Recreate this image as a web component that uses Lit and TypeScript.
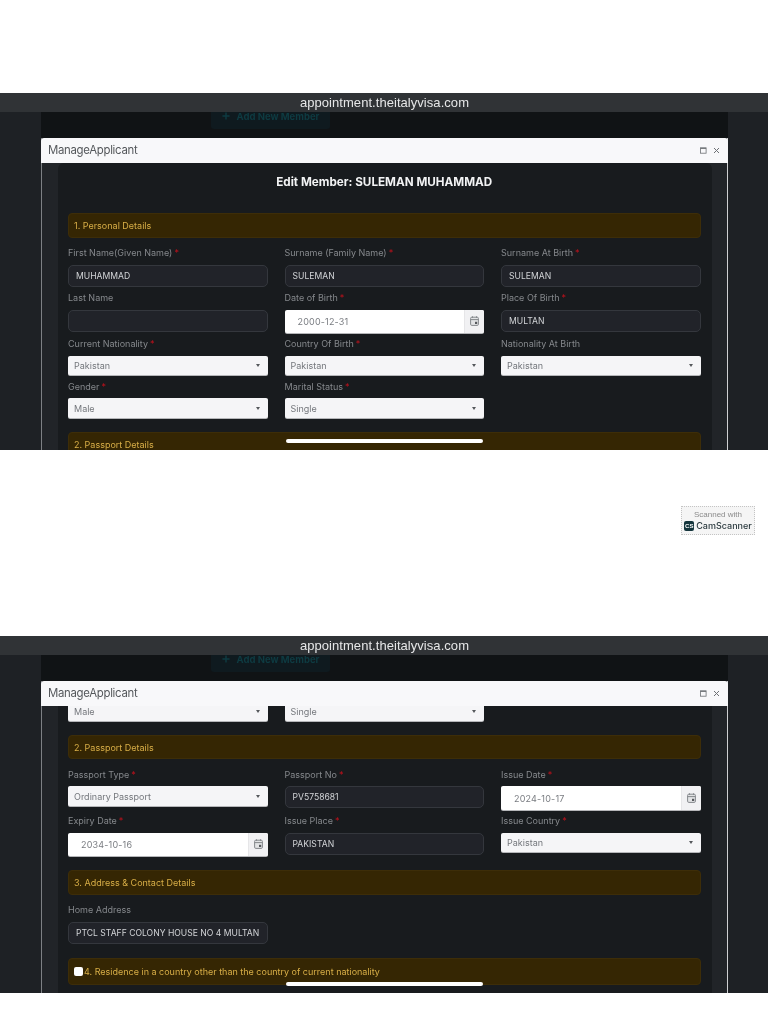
import { LitElement, html, css, nothing } from "lit";
import { customElement, property } from "lit/decorators.js";

type Field = { label: string; kind: "input" | "date" | "select"; value: string; req?: boolean };

const sections: { title: string; check?: boolean; fields: Field[] }[] = [
  {
    title: "1. Personal Details",
    fields: [
      { label: "First Name(Given Name)", kind: "input", value: "MUHAMMAD", req: true },
      { label: "Surname (Family Name)", kind: "input", value: "SULEMAN", req: true },
      { label: "Surname At Birth", kind: "input", value: "SULEMAN", req: true },
      { label: "Last Name", kind: "input", value: "" },
      { label: "Date of Birth", kind: "date", value: "2000-12-31", req: true },
      { label: "Place Of Birth", kind: "input", value: "MULTAN", req: true },
      { label: "Current Nationality", kind: "select", value: "Pakistan", req: true },
      { label: "Country Of Birth", kind: "select", value: "Pakistan", req: true },
      { label: "Nationality At Birth", kind: "select", value: "Pakistan" },
      { label: "Gender", kind: "select", value: "Male", req: true },
      { label: "Marital Status", kind: "select", value: "Single", req: true },
    ],
  },
  {
    title: "2. Passport Details",
    fields: [
      { label: "Passport Type", kind: "select", value: "Ordinary Passport", req: true },
      { label: "Passport No", kind: "input", value: "PV5758681", req: true },
      { label: "Issue Date", kind: "date", value: "2024-10-17", req: true },
      { label: "Expiry Date", kind: "date", value: "2034-10-16", req: true },
      { label: "Issue Place", kind: "input", value: "PAKISTAN", req: true },
      { label: "Issue Country", kind: "select", value: "Pakistan", req: true },
    ],
  },
  {
    title: "3. Address & Contact Details",
    fields: [{ label: "Home Address", kind: "input", value: "PTCL STAFF COLONY HOUSE NO 4 MULTAN" }],
  },
  { title: "4. Residence in a country other than the country of current nationality", check: true, fields: [] },
];

@customElement("phone-shot")
class PhoneShot extends LitElement {
  @property({ type: Boolean }) scrolled = false;

  static styles = css`
    :host { display: block; font-family: "Inter", "Open Sans", sans-serif; }
    .shot { position: relative; height: 357px; overflow: hidden; background: #1e2125; display: flex; flex-direction: column; filter: blur(0.35px); }
    .url { height: 19px; flex: none; display: flex; align-items: center; justify-content: center; padding-left: 1px; background: #303336; color: #e6e7e8; font: 13px "Liberation Sans", sans-serif; letter-spacing: 0.05px; position: relative; z-index: 2; }
    .page { flex: 1; margin: 0 40px 0 41px; background: #101315; display: flex; flex-direction: column; align-items: flex-start; }
    .add { margin-left: 170px; width: 119px; height: 17px; box-sizing: border-box; padding-bottom: 9px; background: #0f1a1f; border-radius: 0 0 3px 3px; display: flex; align-items: center; justify-content: center; gap: 7px; color: #0e3b42; font: 700 9.5px "Inter", sans-serif; }
    .add svg { width: 8px; height: 8px; }
    .window { position: absolute; left: 41px; top: 45px; bottom: 0; width: 686.5px; box-sizing: border-box; display: flex; flex-direction: column; border-left: 1px solid #7d8084; border-right: 1.5px solid #cfd0d2; background: #212428; }
    .titlebar { margin: 0 -1.5px 0 -1px; height: 24.5px; flex: none; background: #f8f8fa; border-radius: 3px 3px 0 0; display: flex; align-items: center; padding: 0 8px 0 7px; color: #55585c; font-size: 11.4px; letter-spacing: -0.3px; position: relative; z-index: 1; }
    .titlebar .name { flex: 1; }
    .titlebar .btns { display: flex; gap: 6.4px; align-items: center; }
    .titlebar svg { width: 7px; height: 7px; display: block; }
    .scroller { flex: 1; overflow: hidden; }
    .panel { margin: 0.5px 15px 0 16px; padding: 0 11px 40px 10px; background: #181b1e; border-radius: 6px 6px 0 0; }
    .panel.scrolled { margin-top: -239.5px; }
    h2 { margin: 0; padding: 10px 0 22px; text-align: center; color: #f2f3f4; font: 700 11.7px/18px "Inter", sans-serif; }
    .bar { height: 24.6px; box-sizing: border-box; margin-bottom: 4px; padding: 0 5px; display: flex; align-items: center; background: #352603; border: 1px solid #3d2d08; border-radius: 4px; color: #d8ae47; font-size: 9px; }
    .bar.check { height: 27.6px; margin-bottom: 14px; }
    .bar input { appearance: none; width: 9px; height: 9px; margin: 0 1px 0 0; flex: none; background: #fff; border-radius: 2px; }
    .grid { display: grid; grid-template-columns: repeat(3, minmax(0, 1fr)); column-gap: 17px; align-items: start; margin-bottom: 14px; }
    label { display: block; height: 23px; padding-top: 5.5px; box-sizing: border-box; line-height: 12px; color: #85888c; font-size: 9px; }
    label b { color: #c4101b; font-weight: 400; margin-left: 2px; }
    .text { height: 22px; box-sizing: border-box; padding: 0 7px; display: flex; align-items: center; background: #212329; border: 1px solid #34373d; border-radius: 5px; color: #d2d4d7; font-size: 8.6px; white-space: nowrap; overflow: hidden; }
    .select { height: 19.5px; box-sizing: border-box; padding: 0 6px; display: flex; align-items: center; justify-content: space-between; background: #f5f5f7; border-radius: 2px; box-shadow: 0 1px 0 #b5b6b9; color: #74777c; font-size: 9px; }
    .caret { width: 0; height: 0; border: 2.5px solid transparent; border-top: 3.5px solid #54575b; border-bottom: 0; margin-right: 2px; }
    .date { height: 23.3px; box-sizing: border-box; display: flex; background: #fff; border-radius: 2px; box-shadow: 0 1px 0 #b5b6b9; color: #797c81; font-size: 9px; letter-spacing: 0.02em; }
    .date span { flex: 1; padding-left: 13px; display: flex; align-items: center; }
    .date i { width: 19px; flex: none; display: flex; align-items: center; justify-content: center; background: #f1f1f3; border-left: 1px solid #e6e6e8; border-radius: 0 2px 2px 0; }
    .date svg { width: 9px; height: 10px; }
    .home { position: absolute; left: 286px; top: 345.5px; width: 197px; height: 4.5px; background: #fff; border-radius: 3px; z-index: 3; }
  `;

  private field(f: Field) {
    if (f.kind === "input") return html`<div class="text">${f.value}</div>`;
    if (f.kind === "select") return html`<div class="select">${f.value}<span class="caret"></span></div>`;
    return html`<div class="date"><span>${f.value}</span><i>
      <svg viewBox="0 0 9 10" fill="none"><rect x=".6" y="1.2" width="7.8" height="8.2" rx="1.2" stroke="#85888c" fill="#e2e3e5"/><path d="M.6 3.6h7.8" stroke="#85888c"/><path d="M2.5.3v1.6M6.5.3v1.6" stroke="#85888c"/><rect x="5" y="5.8" width="2.2" height="2.2" fill="#55585c"/></svg>
    </i></div>`;
  }

  render() {
    return html`<div class="shot">
      <div class="url">appointment.theitalyvisa.com</div>
      <div class="page">
        <div class="add">
          <svg viewBox="0 0 9 9"><path d="M4.5 .5v8M.5 4.5h8" stroke="#0e3b42" stroke-width="1.6"/></svg>
          Add New Member
        </div>
      </div>
      <div class="window">
        <div class="titlebar">
          <span class="name">ManageApplicant</span>
          <span class="btns">
            <svg viewBox="0 0 7 7" fill="none"><rect x=".5" y=".8" width="5.6" height="5.4" stroke="#6d7074" stroke-width=".8"/><path d="M.5 1.4h5.6" stroke="#6d7074" stroke-width="1"/></svg>
            <svg viewBox="0 0 7 7" fill="none"><path d="M1 1l5 5M6 1l-5 5" stroke="#6d7074" stroke-width="1"/></svg>
          </span>
        </div>
        <div class="scroller">
          <div class="panel ${this.scrolled ? "scrolled" : ""}">
            <h2>Edit Member: SULEMAN MUHAMMAD</h2>
            ${sections.map(
              (s) => html`
                <div class="bar ${s.check ? "check" : ""}">
                  ${s.check ? html`<input type="checkbox" />` : nothing}${s.title}
                </div>
                ${s.fields.length
                  ? html`<div class="grid">
                      ${s.fields.map(
                        (f) => html`<div>
                          <label>${f.label}${f.req ? html`<b>*</b>` : nothing}</label>
                          ${this.field(f)}
                        </div>`
                      )}
                    </div>`
                  : nothing}
              `
            )}
          </div>
        </div>
      </div>
      <div class="home"></div>
    </div>`;
  }
}

@customElement("app-root")
class AppRoot extends LitElement {
  static styles = css`
    :host { display: block; height: 1024px; background: #fff; padding-top: 93px; box-sizing: border-box; font-family: "Inter", sans-serif; }
    .gap { height: 186px; box-sizing: border-box; padding: 56px 13px 0 0; display: flex; justify-content: flex-end; align-items: flex-start; }
    .badge { width: 74px; height: 29px; box-sizing: border-box; border: 1px dotted #c4c4c4; background: #f5f5f5; display: flex; flex-direction: column; align-items: center; justify-content: center; gap: 1px; filter: blur(0.3px); }
    .scan { font: 8px/9px "Liberation Sans", sans-serif; color: #8b8b8b; }
    .logo { display: flex; align-items: center; gap: 2px; font: 500 9px/12px "Inter", sans-serif; color: #2b3a3f; }
    .cs { width: 10px; height: 10px; border-radius: 2px; background: #14353c; color: #fff; font: 700 6px/10px "Liberation Sans", sans-serif; text-align: center; }
  `;
  render() {
    return html`
      <phone-shot></phone-shot>
      <div class="gap">
        <div class="badge">
          <div class="scan">Scanned with</div>
          <div class="logo"><span class="cs">CS</span>CamScanner</div>
        </div>
      </div>
      <phone-shot scrolled></phone-shot>
    `;
  }
}
